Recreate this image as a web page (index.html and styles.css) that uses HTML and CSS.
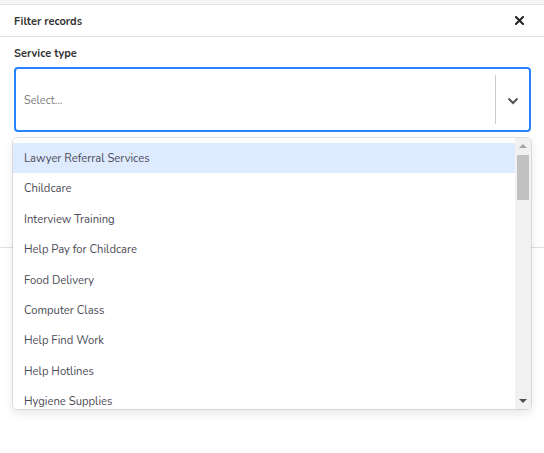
FILE: index.html
```html
<!DOCTYPE html>
<html>
<head>
<meta charset="utf-8">
<link rel="stylesheet" href="styles.css">
</head>
<body>
<div class="topband"></div>
<div class="modal">
  <div class="modal-header">
    <span class="title">Filter records</span>
    <svg class="close" width="9" height="9" viewBox="0 0 9 9"><path d="M1 1L8 8M8 1L1 8" stroke="#222" stroke-width="2" stroke-linecap="square"/></svg>
  </div>
  <div class="modal-body">
    <div class="label">Service type</div>
    <div class="select-wrap">
      <div class="select">
        <div class="placeholder">Select...</div>
        <div class="indicators">
          <span class="sep"></span>
          <svg class="chev" width="12" height="8" viewBox="0 0 12 8"><path d="M1.5 1.5L6 6L10.5 1.5" fill="none" stroke="#555" stroke-width="2"/></svg>
        </div>
      </div>
      <div class="menu">
        <div class="menu-list">
          <div class="opt focused">Lawyer Referral Services</div>
          <div class="opt">Childcare</div>
          <div class="opt">Interview Training</div>
          <div class="opt">Help Pay for Childcare</div>
          <div class="opt">Food Delivery</div>
          <div class="opt">Computer Class</div>
          <div class="opt">Help Find Work</div>
          <div class="opt">Help Hotlines</div>
          <div class="opt">Hygiene Supplies</div>
        </div>
        <div class="scrollbar">
          <div class="arrow up"></div>
          <div class="track"><div class="thumb"></div></div>
          <div class="arrow down"></div>
        </div>
      </div>
    </div>
  </div>
  <div class="modal-footer"></div>
</div>
</body>
</html>
```
FILE: styles.css
```css
html, body {
  margin: 0;
  padding: 0;
  background: #fff;
  font-family: "Nunito", "Lato", "Noto Sans", sans-serif;
  color: #333;
}
body {
  min-height: 453px;
}
.topband {
  height: 4px;
  background: #f4f5f7;
  border-bottom: 1px solid #e2e4e8;
}
.modal-header {
  height: 31px;
  display: flex;
  align-items: center;
  justify-content: space-between;
  padding: 0 20px 0 14px;
  border-bottom: 1px solid #dee2e6;
}
.title {
  font-size: 11px;
  font-weight: 700;
  color: #333;
  padding-top: 1px;
}
.close {
  display: block;
}
.modal-body {
  height: 200px;
  padding: 10px 13px 0 14px;
}
.label {
  font-size: 11px;
  font-weight: 700;
  color: #333;
  height: 14px;
  line-height: 14px;
  margin-bottom: 6px;
}
.select-wrap {
  position: relative;
}
.select {
  height: 61px;
  border: 2px solid #2684ff;
  border-radius: 4px;
  display: flex;
  align-items: center;
  justify-content: space-between;
}
.placeholder {
  font-size: 11px;
  color: #808080;
  padding-left: 8px;
  padding-top: 2px;
}
.indicators {
  display: flex;
  align-items: center;
  align-self: stretch;
  padding: 6px 0;
}
.sep {
  width: 1px;
  align-self: stretch;
  background: #cccccc;
}
.chev {
  display: block;
  margin: 2px 10px 0 11px;
}
.menu {
  position: absolute;
  top: 71px;
  left: -1px;
  right: 0;
  z-index: 5;
  background: #fff;
  border-radius: 4px;
  box-shadow: 0 0 0 1px rgba(0,0,0,0.1), 0 4px 11px rgba(0,0,0,0.1);
  overflow: hidden;
  display: flex;
  height: 271px;
}
.menu-list {
  flex: 1;
  padding-top: 5px;
  overflow: hidden;
}
.opt {
  height: 30.4px;
  line-height: 32px;
  padding-left: 11px;
  font-size: 11.25px;
  color: #4a4a55;
  white-space: nowrap;
}
.opt.focused {
  background: #deebff;
}
.scrollbar {
  width: 16px;
  background: #f1f1f1;
  display: flex;
  flex-direction: column;
}
.arrow {
  height: 15px;
  position: relative;
}
.arrow.up::after,
.arrow.down::after {
  content: "";
  position: absolute;
  left: 4px;
  border-left: 4px solid transparent;
  border-right: 4px solid transparent;
}
.arrow.up::after {
  top: 6px;
  border-bottom: 4px solid #a3a3a3;
}
.arrow.down::after {
  top: 5px;
  border-top: 4px solid #505050;
}
.track {
  flex: 1;
  padding: 2px 2px 0 2px;
}
.thumb {
  height: 45px;
  background: #c1c1c1;
}
.modal-footer {
  border-top: 1px solid #dee2e6;
  height: 40px;
}
```
